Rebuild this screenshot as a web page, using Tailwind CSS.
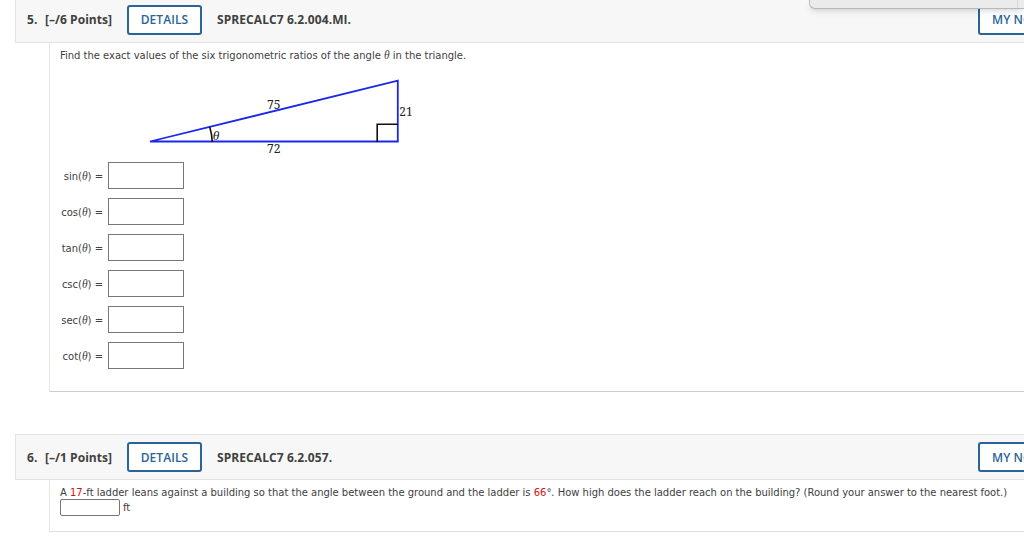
<!DOCTYPE html>
<html lang="en">
<head>
    <meta charset="UTF-8">
    <meta name="viewport" content="width=device-width, initial-scale=1.0">
    <title>SPRECALC7 6.2</title>
    <script src="https://cdn.jsdelivr.net/npm/@tailwindcss/browser@4"></script>
</head>
<body class="h-[541px] overflow-hidden bg-white font-['DejaVu_Sans',sans-serif] text-[10px] tracking-[-0.015px] text-[#404040]">
    <!-- bottom edge of the floating window -->
    <div class="absolute right-0 top-0 z-10 h-[9px] w-[215px] rounded-bl-md border-b border-l border-[#b8b8b8] bg-[#ebebeb] shadow-md">
        <div class="ml-[207px] h-full w-px bg-[#d8d8d8]"></div>
    </div>

    <main class="w-full overflow-hidden pl-[15px]">
        <section>
            <header class="flex h-[43px] items-start border-b border-l border-[#e2e2e2] bg-[#f7f7f7] pl-[11px] font-['Open_Sans',sans-serif] text-[12px] font-bold tracking-[0.08px]">
                <h2 class="mt-[11px] flex w-[100px] shrink-0 leading-[18px]"><span class="w-[18px]">5.</span><span class="tracking-[0.04px]">[–/6 Points]</span></h2>
                <button class="mt-[5px] h-[30px] w-[75px] shrink-0 rounded-[3px] border-2 border-[#2a6496] bg-white font-semibold text-[#2a6496]">DETAILS</button>
                <span class="mt-[11px] ml-[15px] w-[761px] shrink-0 leading-[18px]">SPRECALC7 6.2.004.MI.</span>
                <button class="mt-[5px] h-[30px] w-[46px] shrink-0 overflow-hidden rounded-l-[3px] border-2 border-r-0 border-[#2a6496] bg-white pl-[12px] text-left font-semibold whitespace-nowrap text-[#2a6496]">MY NOTES</button>
            </header>
            <div class="ml-[34px] h-[349px] border-b border-l border-b-[#cccccc] border-l-[#e8e8e8] pt-[5px] pl-[10px]">
                <p class="h-[14px] leading-[16px]">Find the exact values of the six trigonometric ratios of the angle <i class="font-['Liberation_Serif',serif] text-[11.5px] leading-none">θ</i> in the triangle.</p>
                <svg class="mt-[8px] ml-[80px] block" width="290" height="90" viewBox="140 70 290 90" fill="none">
                    <path d="M150 141.5L397.8 80.7V141.5Z" stroke="#1a28ee" stroke-width="1.8"/>
                    <path d="M209.7 127Q212 134 212.3 142M377.2 142V124.3H398" stroke="#111" stroke-width="1.6"/>
                    <g fill="#222" font-family="Noto Serif, Liberation Serif, serif" font-size="13">
                        <text x="267" y="108.5" textLength="13.5" lengthAdjust="spacingAndGlyphs">75</text>
                        <text x="267" y="152.5" textLength="13.5" lengthAdjust="spacingAndGlyphs">72</text>
                        <text x="399.3" y="116" textLength="13.2" lengthAdjust="spacingAndGlyphs">21</text>
                        <text x="212.7" y="139.5" font-size="13.5" font-style="italic" font-family="Liberation Serif, serif">θ</text>
                    </g>
                </svg>
                <div class="mt-[-8px] grid w-[124px] grid-cols-[43px_76px] gap-x-[5px] gap-y-[9px] pt-[10px] text-right leading-[30px]">
                    <label class="h-[27px] whitespace-nowrap">sin(<i class="font-['Liberation_Serif',serif] text-[11.5px] leading-none">θ</i>) =</label>
                    <input class="h-[27px] border border-[#767676] bg-white">
                    <label class="h-[27px] whitespace-nowrap">cos(<i class="font-['Liberation_Serif',serif] text-[11.5px] leading-none">θ</i>) =</label>
                    <input class="h-[27px] border border-[#767676] bg-white">
                    <label class="h-[27px] whitespace-nowrap">tan(<i class="font-['Liberation_Serif',serif] text-[11.5px] leading-none">θ</i>) =</label>
                    <input class="h-[27px] border border-[#767676] bg-white">
                    <label class="h-[27px] whitespace-nowrap">csc(<i class="font-['Liberation_Serif',serif] text-[11.5px] leading-none">θ</i>) =</label>
                    <input class="h-[27px] border border-[#767676] bg-white">
                    <label class="h-[27px] whitespace-nowrap">sec(<i class="font-['Liberation_Serif',serif] text-[11.5px] leading-none">θ</i>) =</label>
                    <input class="h-[27px] border border-[#767676] bg-white">
                    <label class="h-[27px] whitespace-nowrap">cot(<i class="font-['Liberation_Serif',serif] text-[11.5px] leading-none">θ</i>) =</label>
                    <input class="h-[27px] border border-[#767676] bg-white">
                </div>
            </div>
        </section>

        <section class="mt-[42px]">
            <header class="flex h-[46px] items-start border-y border-l border-[#e2e2e2] bg-[#f7f7f7] pl-[11px] font-['Open_Sans',sans-serif] text-[12px] font-bold tracking-[0.08px]">
                <h2 class="mt-[14px] flex w-[100px] shrink-0 leading-[18px]"><span class="w-[18px]">6.</span><span class="tracking-[0.04px]">[–/1 Points]</span></h2>
                <button class="mt-[7px] h-[30px] w-[75px] shrink-0 rounded-[3px] border-2 border-[#2a6496] bg-white pt-px font-semibold text-[#2a6496]">DETAILS</button>
                <span class="mt-[14px] ml-[15px] w-[761px] shrink-0 leading-[18px]">SPRECALC7 6.2.057.</span>
                <button class="mt-[7px] h-[30px] w-[46px] shrink-0 overflow-hidden rounded-l-[3px] border-2 border-r-0 border-[#2a6496] bg-white pt-px pl-[12px] text-left font-semibold whitespace-nowrap text-[#2a6496]">MY NOTES</button>
            </header>
            <div class="ml-[34px] h-[52px] border-b border-l border-b-[#e0e0e0] border-l-[#e8e8e8] pt-[5px] pl-[10px]">
                <p class="h-[14px] leading-[16px] whitespace-nowrap">A <span class="text-[#d01414]">17</span>-ft ladder leans against a building so that the angle between the ground and the ladder is <span class="text-[#d01414]">66</span>°. How high does the ladder reach on the building? (Round your answer to the nearest foot.)</p>
                <div class="flex items-center gap-[3px]">
                    <input class="h-[17px] w-[60px] rounded-[2px] border border-[#767676] bg-white">
                    <span>ft</span>
                </div>
            </div>
        </section>
    </main>
</body>
</html>
